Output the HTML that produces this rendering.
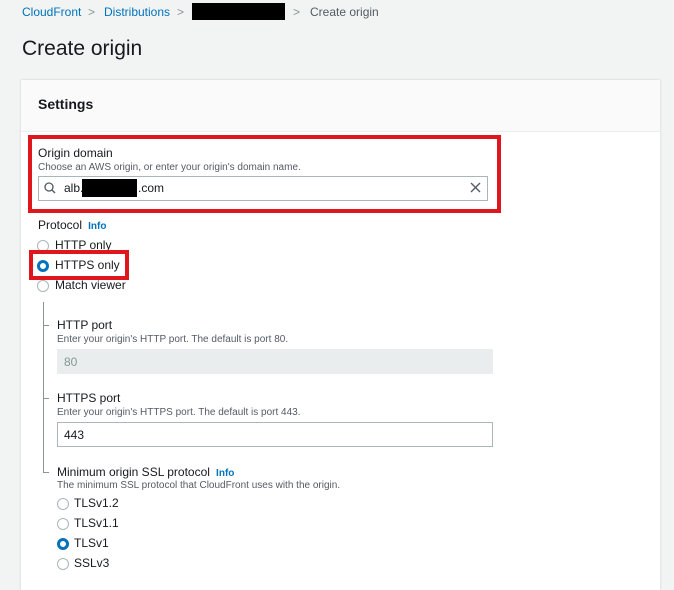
<html><head><style>
body{margin:0;width:674px;height:578px;background:#f2f3f3;font-family:"Liberation Sans",sans-serif;position:relative;overflow:hidden;color:#16191f}
.a{position:absolute;white-space:nowrap}
.bc{font-size:12px;top:5px}
.lab{font-size:12px;color:#16191f}
.d{font-size:10px;color:#545b64}
.r{position:absolute;width:10px;height:10px;border:1px solid #aab7b8;border-radius:50%;background:#fff}
.r.on{border:3px solid #0073bb;width:6px;height:6px}
.rt{font-size:12px;color:#16191f}
.info{color:#0073bb;font-weight:bold;font-size:10px}
</style></head><body>
<div class="a bc" style="left:22px;color:#0073bb">CloudFront</div>
<div class="a bc" style="left:88px;color:#879596">&gt;</div>
<div class="a bc" style="left:104px;color:#0073bb">Distributions</div>
<div class="a bc" style="left:177px;color:#879596">&gt;</div>
<div class="a" style="left:192px;top:3px;width:93px;height:17px;background:#000"></div>
<div class="a bc" style="left:293px;color:#879596">&gt;</div>
<div class="a bc" style="left:310px;color:#545b64">Create origin</div>
<div class="a" style="left:22px;top:37px;font-size:21px">Create origin</div>
<div class="a" style="left:21px;top:80px;width:639px;height:510px;background:#fff;box-shadow:0 0 2px #ccc"></div>
<div class="a" style="left:21px;top:80px;width:639px;height:51px;background:#fafafa;border-bottom:1px solid #eaeded"></div>
<div class="a" style="left:38px;top:96px;font-size:14px;font-weight:bold">Settings</div>
<div class="a" style="left:28px;top:135px;width:465px;height:70px;border:4px solid #e0161e"></div>
<div class="a lab" style="left:38px;top:146px">Origin domain</div>
<div class="a d" style="left:38px;top:162px">Choose an AWS origin, or enter your origin's domain name.</div>
<div class="a" style="left:38px;top:176px;width:448px;height:23px;border:1px solid #aab7b8;background:#fff"></div>
<svg class="a" style="left:44px;top:182px" width="12" height="12" viewBox="0 0 12 12"><circle cx="5" cy="5" r="4" fill="none" stroke="#545b64" stroke-width="1.3"/><path d="M8 8l3 3" stroke="#545b64" stroke-width="1.4"/></svg>
<div class="a" style="left:64px;top:181px;font-size:12px">alb.</div>
<div class="a" style="left:82px;top:179px;width:55px;height:18px;background:#000"></div>
<div class="a" style="left:138px;top:181px;font-size:12px">.com</div>
<svg class="a" style="left:470px;top:182px" width="11" height="11"><path d="M1 1l9 9M10 1l-9 9" stroke="#545b64" stroke-width="1.4"/></svg>
<div class="a lab" style="left:38px;top:218px">Protocol <span class="info">&nbsp;Info</span></div>
<div class="r a" style="left:37px;top:240px"></div><div class="a rt" style="left:55px;top:238px">HTTP only</div>
<div class="a" style="left:29px;top:250px;width:92px;height:22px;border:4px solid #e0161e"></div>
<div class="r a on" style="left:37px;top:260px"></div><div class="a rt" style="left:55px;top:258px">HTTPS only</div>
<div class="r a" style="left:37px;top:280px"></div><div class="a rt" style="left:55px;top:278px">Match viewer</div>
<div class="a" style="left:43px;top:302px;width:1px;height:170px;background:#879596"></div>
<div class="a" style="left:43px;top:325px;width:6px;height:1px;background:#879596"></div>
<div class="a" style="left:43px;top:398px;width:6px;height:1px;background:#879596"></div>
<div class="a" style="left:43px;top:472px;width:6px;height:1px;background:#879596"></div>
<div class="a lab" style="left:57px;top:318px">HTTP port</div>
<div class="a d" style="left:57px;top:334px">Enter your origin's HTTP port. The default is port 80.</div>
<div class="a" style="left:57px;top:349px;width:436px;height:25px;background:#eaeded"></div>
<div class="a" style="left:64px;top:355px;font-size:12px;color:#879596">80</div>
<div class="a lab" style="left:57px;top:391px">HTTPS port</div>
<div class="a d" style="left:57px;top:407px">Enter your origin's HTTPS port. The default is port 443.</div>
<div class="a" style="left:57px;top:422px;width:434px;height:23px;border:1px solid #aab7b8"></div>
<div class="a" style="left:64px;top:428px;font-size:12px">443</div>
<div class="a lab" style="left:57px;top:465px">Minimum origin SSL protocol <span class="info">&nbsp;Info</span></div>
<div class="a d" style="left:57px;top:480px">The minimum SSL protocol that CloudFront uses with the origin.</div>
<div class="r a" style="left:57px;top:498px"></div><div class="a rt" style="left:74px;top:496px">TLSv1.2</div>
<div class="r a" style="left:57px;top:518px"></div><div class="a rt" style="left:74px;top:516px">TLSv1.1</div>
<div class="r a on" style="left:57px;top:538px"></div><div class="a rt" style="left:74px;top:536px">TLSv1</div>
<div class="r a" style="left:57px;top:558px"></div><div class="a rt" style="left:74px;top:556px">SSLv3</div>
</body></html>
